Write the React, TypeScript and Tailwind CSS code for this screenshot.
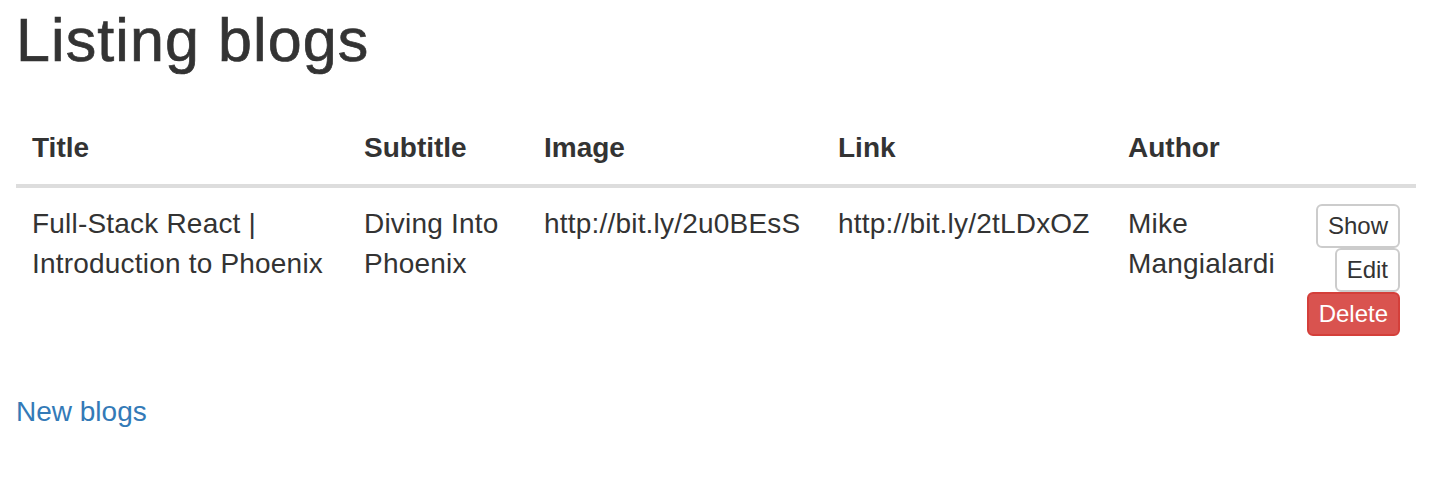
import React from "react";

export default function App() {
  const font = { fontFamily: '"Liberation Sans", Arial, Helvetica, sans-serif' };
  return (
    <div className="bg-white w-[1446px] h-[504px] pl-[16px] text-[#333]" style={font}>
      <h2 className="text-[61px] leading-[66px] font-normal pt-[7px] m-0 tracking-[1.1px] [-webkit-text-stroke:0.7px_#333]">
        Listing blogs
      </h2>
      <table className="table-fixed w-[1400px] mt-[39px] border-collapse text-[28px] leading-[40px]">
        <colgroup>
          <col className="w-[332px]" />
          <col className="w-[180px]" />
          <col className="w-[294px]" />
          <col className="w-[290px]" />
          <col className="w-[179px]" />
          <col className="w-[125px]" />
        </colgroup>
        <thead>
          <tr className="border-b-[4px] border-[#ddd]">
            <th className="p-[16px] text-left font-bold align-bottom">Title</th>
            <th className="p-[16px] text-left font-bold align-bottom">Subtitle</th>
            <th className="p-[16px] text-left font-bold align-bottom">Image</th>
            <th className="p-[16px] text-left font-bold align-bottom">Link</th>
            <th className="p-[16px] text-left font-bold align-bottom">Author</th>
            <th className="p-[16px]"></th>
          </tr>
        </thead>
        <tbody>
          <tr className="tracking-[0.2px]">
            <td className="p-[16px] align-top">
              Full-Stack React |<br />Introduction to Phoenix
            </td>
            <td className="p-[16px] align-top">
              Diving Into<br />Phoenix
            </td>
            <td className="p-[16px] align-top whitespace-nowrap">http://bit.ly/2u0BEsS</td>
            <td className="p-[16px] align-top whitespace-nowrap">http://bit.ly/2tLDxOZ</td>
            <td className="p-[16px] align-top">
              Mike<br />Mangialardi
            </td>
            <td className="p-[16px] align-top tracking-normal">
              <div className="flex flex-col items-end">
                <span className="inline-block h-[44px] px-[10px] text-[24px] leading-[40px] bg-white border-2 border-[#ccc] rounded-[6px] text-[#333]">
                  Show
                </span>
                <span className="inline-block h-[44px] px-[10px] text-[24px] leading-[40px] bg-white border-2 border-[#ccc] rounded-[6px] text-[#333]">
                  Edit
                </span>
                <span className="inline-block h-[44px] px-[10px] text-[24px] leading-[40px] bg-[#d9534f] border-2 border-[#d43f3a] rounded-[6px] text-white">
                  Delete
                </span>
              </div>
            </td>
          </tr>
        </tbody>
      </table>
      <div className="mt-[40px] text-[28px] leading-[40px]">
        <a className="text-[#337ab7]" href="#">New blogs</a>
      </div>
    </div>
  );
}
